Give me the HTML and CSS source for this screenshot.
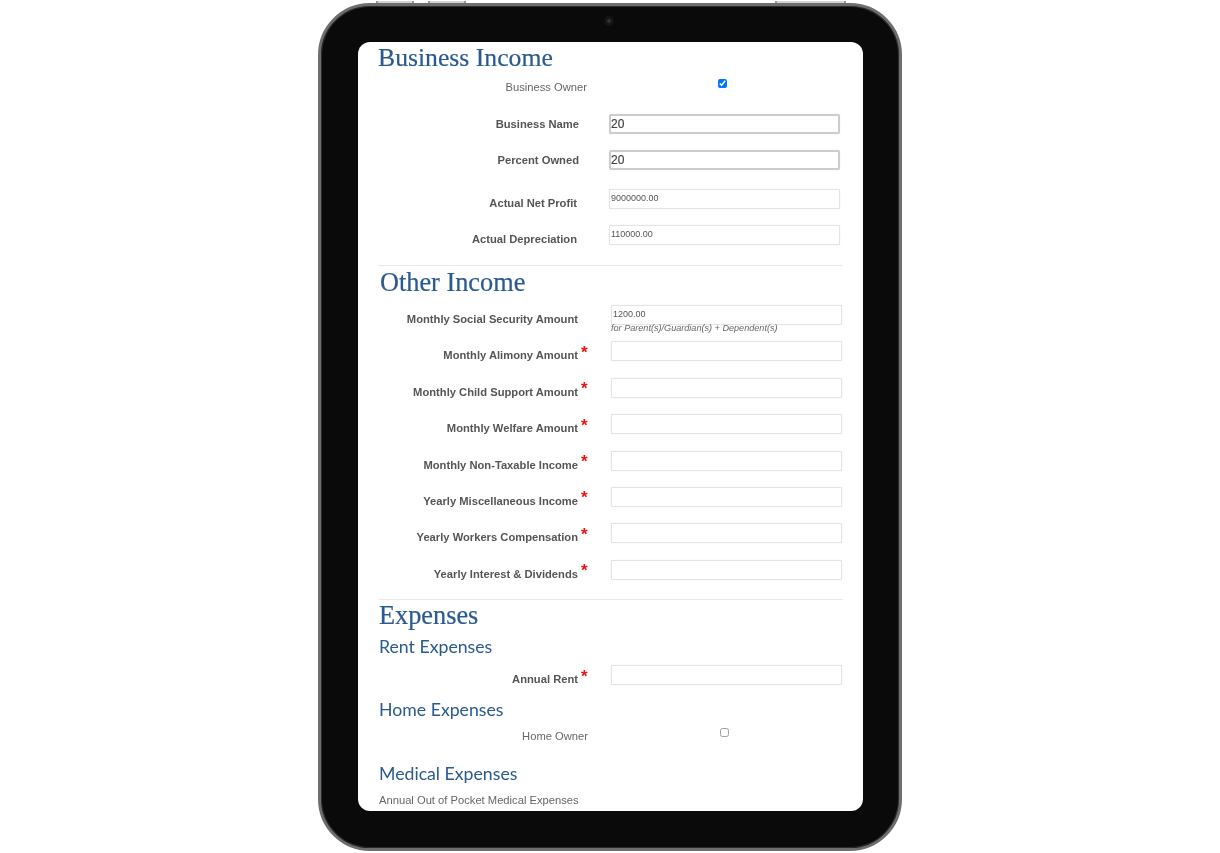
FILE: index.html
```html
<!DOCTYPE html>
<html lang="en">
<head>
    <meta charset="UTF-8">
    <meta name="viewport" content="width=device-width, initial-scale=1.0">
    <title>Income and Expenses</title>
    <link rel="stylesheet" href="styles.css">
</head>
<body>
    <div class="tablet">
        <div class="boton boton-vol1"></div>
        <div class="boton boton-vol2"></div>
        <div class="boton boton-der"></div>
        <div class="camara"></div>
        <div class="pantalla">
            <h1 class="titulo primero">Business Income</h1>

            <div class="fila-check owner-negocio">
                <label>Business Owner</label>
                <input type="checkbox" checked>
            </div>

            <div class="fila negocio fuerte primera-negocio">
                <label>Business Name</label>
                <span></span>
                <input type="text" value="20">
            </div>
            <div class="fila negocio fuerte">
                <label>Percent Owned</label>
                <span></span>
                <input type="text" value="20">
            </div>
            <div class="fila negocio neto">
                <label>Actual Net Profit</label>
                <span></span>
                <input type="text" value="9000000.00">
            </div>
            <div class="fila negocio depreciacion">
                <label>Actual Depreciation</label>
                <span></span>
                <input type="text" value="110000.00">
            </div>

            <hr class="linea">
            <h1 class="titulo otro">Other Income</h1>

            <div class="fila social">
                <label>Monthly Social Security Amount</label>
                <span></span>
                <div>
                    <input type="text" value="1200.00">
                    <p class="nota">for Parent(s)/Guardian(s) + Dependent(s)</p>
                </div>
            </div>
            <div class="fila tras-social">
                <label>Monthly Alimony Amount</label>
                <span class="req">*</span>
                <input type="text">
            </div>
            <div class="fila">
                <label>Monthly Child Support Amount</label>
                <span class="req">*</span>
                <input type="text">
            </div>
            <div class="fila">
                <label>Monthly Welfare Amount</label>
                <span class="req">*</span>
                <input type="text">
            </div>
            <div class="fila">
                <label>Monthly Non-Taxable Income</label>
                <span class="req">*</span>
                <input type="text">
            </div>
            <div class="fila">
                <label>Yearly Miscellaneous Income</label>
                <span class="req">*</span>
                <input type="text">
            </div>
            <div class="fila">
                <label>Yearly Workers Compensation</label>
                <span class="req">*</span>
                <input type="text">
            </div>
            <div class="fila">
                <label>Yearly Interest &amp; Dividends</label>
                <span class="req">*</span>
                <input type="text">
            </div>

            <hr class="linea linea-gastos">
            <h1 class="titulo gastos">Expenses</h1>

            <h2 class="subtitulo renta">Rent Expenses</h2>
            <div class="fila fila-renta">
                <label>Annual Rent</label>
                <span class="req">*</span>
                <input type="text">
            </div>

            <h2 class="subtitulo hogar">Home Expenses</h2>
            <div class="fila-check owner-hogar">
                <label>Home Owner</label>
                <input type="checkbox">
            </div>

            <h2 class="subtitulo medico">Medical Expenses</h2>
            <p class="suelta">Annual Out of Pocket Medical Expenses</p>
        </div>
    </div>
</body>
</html>
```
FILE: styles.css
```css
* {
    box-sizing: border-box;
}
body {
    margin: 0;
    height: 853px;
    background-color: white;
    overflow: hidden;
    font-family: "Liberation Sans", Arial, sans-serif;
}
.tablet {
    position: relative;
    width: 584px;
    height: 848px;
    margin: 3px auto 0;
    padding: 36px 37px;
    background-color: #0a0a0a;
    border: 3px solid #6e6e6e;
    border-radius: 52px;
    box-shadow: inset 0 0 0 1px #2c2c2c;
}
.boton {
    position: absolute;
    top: -5px;
    height: 2px;
    background-color: #d4d4d4;
    border-left: 2px solid #999;
    border-right: 2px solid #999;
}
.boton-vol1 {
    left: 55px;
    width: 38px;
}
.boton-vol2 {
    left: 107px;
    width: 38px;
}
.boton-der {
    left: 454px;
    width: 71px;
}
.camara {
    position: absolute;
    top: 10px;
    left: 283px;
    width: 10px;
    height: 10px;
    border-radius: 50%;
    background-color: #333;
    border: 3px solid #151515;
}
.pantalla {
    width: 505px;
    height: 769px;
    padding: 1px 20px 0 21px;
    background-color: white;
    border-radius: 12px;
    overflow: hidden;
    filter: blur(0.5px);
}

.titulo {
    margin: 0;
    height: 30px;
    font-family: "Liberation Serif", serif;
    font-size: 26.3px;
    font-weight: normal;
    line-height: 30px;
    color: #2a5a90;
    -webkit-text-stroke: 0.2px #2a5a90;
}
.primero {
    font-size: 25.7px;
    margin-left: -1px;
}
.otro {
    margin-top: 2px;
    margin-left: 1px;
}
.gastos {
    margin-top: 1px;
}
.subtitulo {
    margin: 0;
    height: 24px;
    font-family: Lato, sans-serif;
    font-size: 17.7px;
    font-weight: normal;
    line-height: 24px;
    color: #2a5a90;
}
.renta {
    margin-top: 4px;
}
.hogar {
    margin-top: 13px;
}
.medico {
    margin-top: 18px;
}

.linea {
    height: 1px;
    margin: 20px 0 0;
    border: none;
    background-color: #eaeaea;
}
.linea-gastos {
    margin-top: 19.6px;
}

.fila {
    display: grid;
    grid-template-columns: 199px 33px 231px;
    height: 20px;
    margin-top: 16.4px;
}
.fila label {
    margin-top: 7px;
    font-size: 11.2px;
    font-weight: bold;
    line-height: 14px;
    text-align: right;
    color: #555;
}
.fila input {
    display: block;
    width: 100%;
    height: 20px;
    padding: 0 1px 2px;
    font-family: "Liberation Sans", Arial, sans-serif;
    font-size: 9px;
    color: #555;
    background-color: white;
    border: 1px solid #e4e4e4;
    border-radius: 1px;
    outline: none;
    box-shadow: 0 0 1px #e0e0e0;
}
.req {
    margin: 2.5px 0 0 3px;
    font-size: 17px;
    font-weight: bold;
    line-height: 17px;
    color: #f01010;
}

.negocio {
    grid-template-columns: 198px 32px 231px;
}
.depreciacion {
    margin-top: 16px;
}
.fuerte {
    grid-template-columns: 200px 30px 231px;
}
.fuerte label {
    margin-top: 3px;
}
.fila.fuerte input {
    padding: 0;
    font-size: 12px;
    color: #444;
    border: 2px solid #ccc;
    border-radius: 2px;
    -webkit-text-stroke: 0.2px #444;
}
.primera-negocio {
    margin-top: 20px;
}
.neto {
    margin-top: 19px;
}
.social {
    height: 32px;
    margin-top: 7px;
}
.tras-social {
    margin-top: 4px;
}
.fila-renta {
    margin-top: 6px;
}
.nota {
    margin: -1px 0 0;
    height: 13px;
    font-size: 9.1px;
    font-style: italic;
    line-height: 9px;
    color: #666;
}

.fila-check {
    display: flex;
    align-items: flex-start;
    height: 20px;
}
.fila-check label {
    text-align: right;
    font-size: 11.2px;
    line-height: 14px;
    color: #666;
}
.fila-check input {
    width: 9px;
    height: 9px;
    margin: 0;
}
.owner-negocio {
    margin-top: 1px;
}
.owner-negocio label {
    width: 208px;
    margin-top: 6px;
}
.owner-negocio input {
    margin: 5px 0 0 131px;
}
.owner-hogar {
    margin-top: 2px;
}
.owner-hogar label {
    width: 209px;
    margin-top: 5px;
}
.owner-hogar input {
    margin: 4px 0 0 132px;
    opacity: 0.7;
}
.suelta {
    margin: 7px 0 0;
    font-size: 11.2px;
    line-height: 14px;
    color: #666;
}
```
